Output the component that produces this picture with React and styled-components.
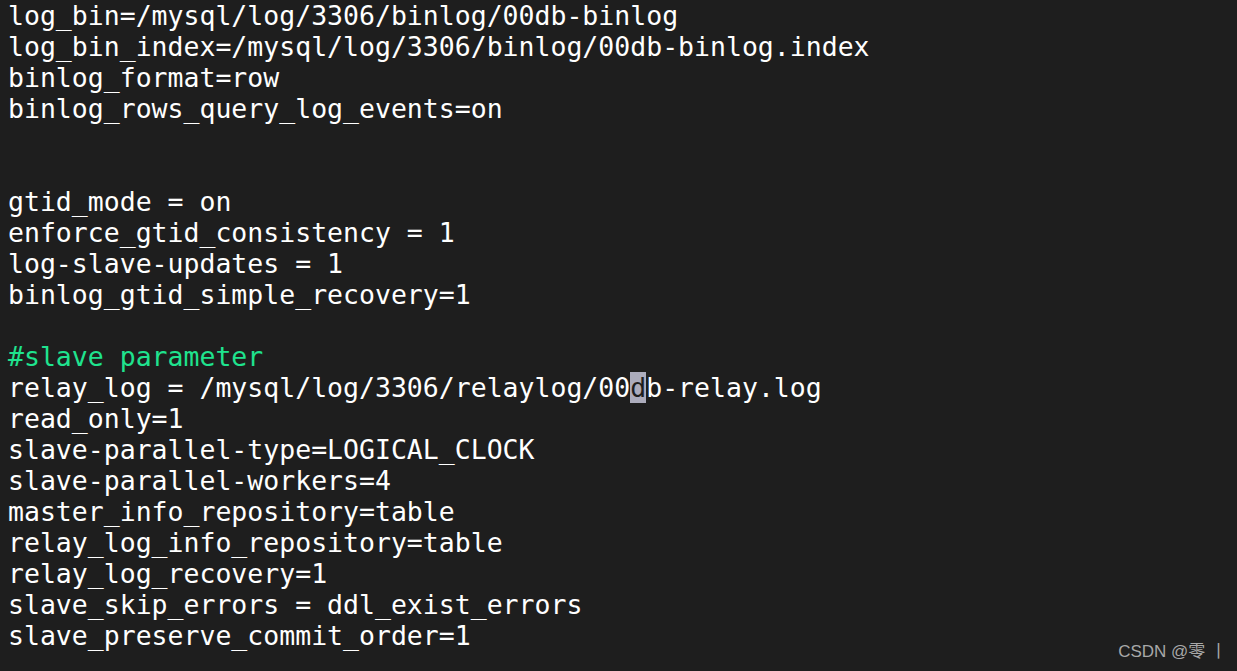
import styled, { createGlobalStyle } from "styled-components";

const lines = [
  "log_bin=/mysql/log/3306/binlog/00db-binlog",
  "log_bin_index=/mysql/log/3306/binlog/00db-binlog.index",
  "binlog_format=row",
  "binlog_rows_query_log_events=on",
  "",
  "",
  "gtid_mode = on",
  "enforce_gtid_consistency = 1",
  "log-slave-updates = 1",
  "binlog_gtid_simple_recovery=1",
  "",
  { comment: "#slave parameter" },
  { before: "relay_log = /mysql/log/3306/relaylog/00", cursor: "d", after: "b-relay.log" },
  "read_only=1",
  "slave-parallel-type=LOGICAL_CLOCK",
  "slave-parallel-workers=4",
  "master_info_repository=table",
  "relay_log_info_repository=table",
  "relay_log_recovery=1",
  "slave_skip_errors = ddl_exist_errors",
  "slave_preserve_commit_order=1",
];

export default function App() {
  return (
    <>
      <GlobalStyle />
      <SCTerminal>
        {lines.map((line, i) => {
          if (typeof line === "string") return <SCLine key={i}>{line || " "}</SCLine>;
          if (line.comment) return <SCLine key={i} $comment>{line.comment}</SCLine>;
          return (
            <SCLine key={i}>
              {line.before}
              <SCCursor>{line.cursor}</SCCursor>
              {line.after}
            </SCLine>
          );
        })}
        <SCWatermark>CSDN @零 丨</SCWatermark>
      </SCTerminal>
    </>
  );
}

const GlobalStyle = createGlobalStyle`
  html, body {
    margin: 0;
    padding: 0;
    background: #1e1e1e;
  }
`;

const SCTerminal = styled.div`
  position: relative;
  width: 1237px;
  height: 671px;
  overflow: hidden;
  box-sizing: border-box;
  padding: 0 0 0 8px;
  background: #1e1e1e;
  font-family: "DejaVu Sans Mono", monospace;
  font-size: 26.5px;
  line-height: 31px;
  color: #ffffff;
`;

const SCLine = styled.div`
  height: 31px;
  white-space: pre;
  color: ${(p) => (p.$comment ? "#1fe38e" : "#ffffff")};
`;

const SCCursor = styled.span`
  background: #acacbc;
  color: #1e1e1e;
`;

const SCWatermark = styled.div`
  position: absolute;
  right: 10px;
  bottom: 9px;
  font-family: "Liberation Sans", "Noto Sans CJK SC", sans-serif;
  font-size: 17px;
  line-height: 20px;
  color: #a8a8a8;
`;
